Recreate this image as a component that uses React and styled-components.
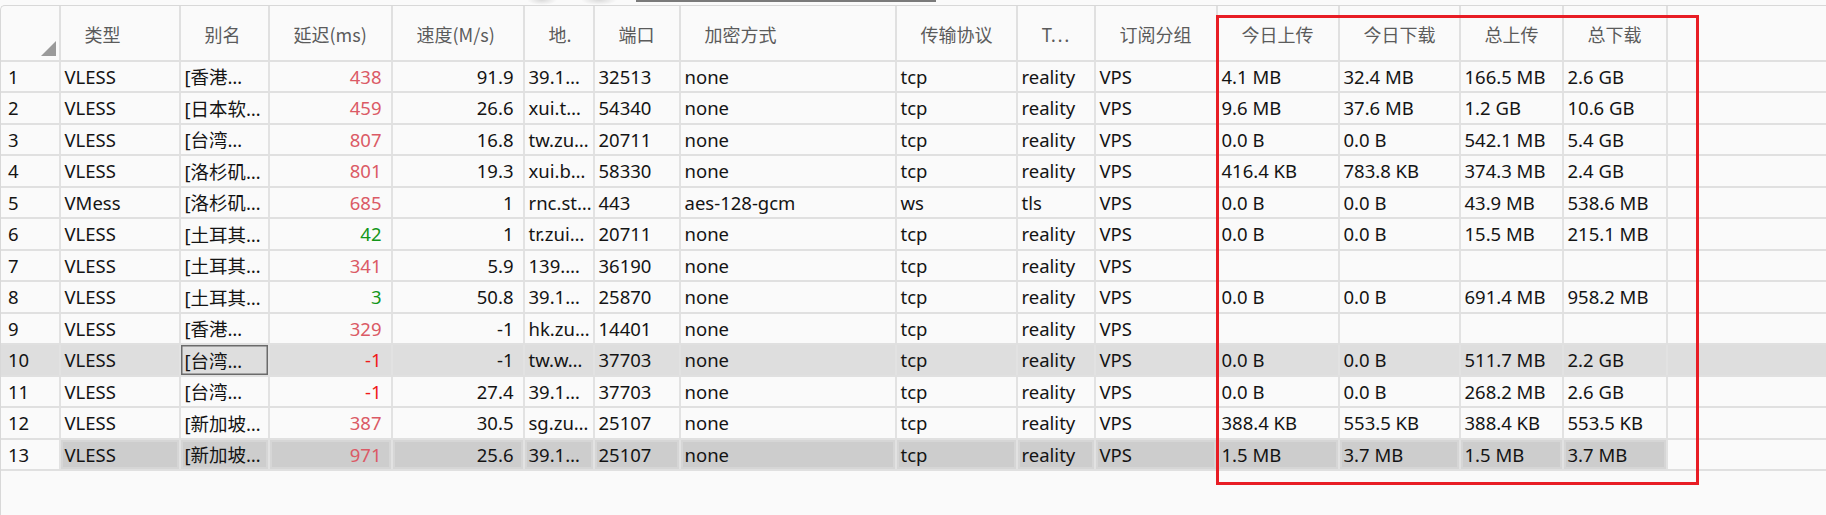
import React from 'react'
import styled, { createGlobalStyle, css } from 'styled-components'

const GlobalStyle = createGlobalStyle`
  html, body {
    margin: 0;
    padding: 0;
    background: #fafafa;
  }
  body {
    font-family: "Noto Sans", "Noto Sans CJK SC", sans-serif;
  }
`

const columns = [
  { title: '', width: 59.5, kind: 'idx' },
  { title: '类型', width: 120 },
  { title: '别名', width: 89 },
  { title: '延迟(ms)', width: 123, align: 'right' },
  { title: '速度(M/s)', width: 132, align: 'right' },
  { title: '地.', width: 70 },
  { title: '端口', width: 86 },
  { title: '加密方式', width: 216 },
  { title: '传输协议', width: 121 },
  { title: 'T…', width: 78 },
  { title: '订阅分组', width: 122 },
  { title: '今日上传', width: 122 },
  { title: '今日下载', width: 121 },
  { title: '总上传', width: 103 },
  { title: '总下载', width: 104 },
]

const template = columns.map((c) => `${c.width}px`).join(' ') + ' 1fr'

// latency tone: 'ok' soft red, 'bad' bright red, 'good' green
const rows = [
  ['VLESS', '[香港…', ['438', 'ok'], '91.9', '39.1…', '32513', 'none', 'tcp', 'reality', 'VPS', '4.1 MB', '32.4 MB', '166.5 MB', '2.6 GB'],
  ['VLESS', '[日本软…', ['459', 'ok'], '26.6', 'xui.t…', '54340', 'none', 'tcp', 'reality', 'VPS', '9.6 MB', '37.6 MB', '1.2 GB', '10.6 GB'],
  ['VLESS', '[台湾…', ['807', 'ok'], '16.8', 'tw.zu…', '20711', 'none', 'tcp', 'reality', 'VPS', '0.0 B', '0.0 B', '542.1 MB', '5.4 GB'],
  ['VLESS', '[洛杉矶…', ['801', 'ok'], '19.3', 'xui.b…', '58330', 'none', 'tcp', 'reality', 'VPS', '416.4 KB', '783.8 KB', '374.3 MB', '2.4 GB'],
  ['VMess', '[洛杉矶…', ['685', 'ok'], '1', 'rnc.st…', '443', 'aes-128-gcm', 'ws', 'tls', 'VPS', '0.0 B', '0.0 B', '43.9 MB', '538.6 MB'],
  ['VLESS', '[土耳其…', ['42', 'good'], '1', 'tr.zui…', '20711', 'none', 'tcp', 'reality', 'VPS', '0.0 B', '0.0 B', '15.5 MB', '215.1 MB'],
  ['VLESS', '[土耳其…', ['341', 'ok'], '5.9', '139.…', '36190', 'none', 'tcp', 'reality', 'VPS', '', '', '', ''],
  ['VLESS', '[土耳其…', ['3', 'good'], '50.8', '39.1…', '25870', 'none', 'tcp', 'reality', 'VPS', '0.0 B', '0.0 B', '691.4 MB', '958.2 MB'],
  ['VLESS', '[香港…', ['329', 'ok'], '-1', 'hk.zu…', '14401', 'none', 'tcp', 'reality', 'VPS', '', '', '', ''],
  ['VLESS', '[台湾…', ['-1', 'bad'], '-1', 'tw.w…', '37703', 'none', 'tcp', 'reality', 'VPS', '0.0 B', '0.0 B', '511.7 MB', '2.2 GB'],
  ['VLESS', '[台湾…', ['-1', 'bad'], '27.4', '39.1…', '37703', 'none', 'tcp', 'reality', 'VPS', '0.0 B', '0.0 B', '268.2 MB', '2.6 GB'],
  ['VLESS', '[新加坡…', ['387', 'ok'], '30.5', 'sg.zu…', '25107', 'none', 'tcp', 'reality', 'VPS', '388.4 KB', '553.5 KB', '388.4 KB', '553.5 KB'],
  ['VLESS', '[新加坡…', ['971', 'ok'], '25.6', '39.1…', '25107', 'none', 'tcp', 'reality', 'VPS', '1.5 MB', '3.7 MB', '1.5 MB', '3.7 MB'],
]

const toneColor = {
  ok: '#db5a66',
  bad: '#f01a1a',
  good: '#13961a',
}

const Page = styled.div`
  position: relative;
  width: 1826px;
  height: 515px;
  overflow: hidden;
`

const TopStrip = styled.div`
  height: 5px;
  display: flex;
  background:
    radial-gradient(ellipse 15px 5px at 542px 0, rgba(0, 0, 0, 0.13), transparent),
    radial-gradient(ellipse 18px 5px at 599px 0, rgba(0, 0, 0, 0.13), transparent);
  .thumb {
    margin-left: 636px;
    width: 300px;
    height: 2px;
    background: #7a7a7a;
  }
`

const Table = styled.div`
  height: 510px;
  box-sizing: border-box;
  border-top: 1.5px solid #d8d8d8;
  border-left: 1.5px solid #d8d8d8;
  border-top-left-radius: 5px;
`

const HeaderRow = styled.div`
  display: grid;
  grid-template-columns: ${template};
  height: 55.5px;
  box-sizing: border-box;
  border-bottom: 2px solid #e0e0e0;
`

const HeaderCell = styled.div`
  display: flex;
  align-items: center;
  box-sizing: border-box;
  padding: 3px 0 0 24px;
  font-family: "Noto Sans CJK SC", "Noto Sans", sans-serif;
  font-size: 18px;
  color: #5b5b5b;
  white-space: nowrap;
  border-right: ${(p) => (p.$last ? 'none' : '2px solid #e0e0e0')};
`

const Corner = styled.div`
  display: flex;
  align-items: flex-end;
  justify-content: flex-end;
  padding: 0 3px 4px 0;
  border-right: 2px solid #e0e0e0;
`

const Row = styled.div`
  display: grid;
  grid-template-columns: ${template};
  height: 31.5px;
  box-sizing: border-box;
  border-bottom: 2px solid #e0e0e0;
  background: ${(p) => (p.$current ? '#dedede' : '#fafafa')};
`

const Cell = styled.div`
  position: relative;
  display: flex;
  align-items: center;
  justify-content: ${(p) => (p.$align === 'right' ? 'flex-end' : 'flex-start')};
  box-sizing: border-box;
  padding: ${(p) => (p.$idx ? '0 0 0 7px' : p.$align === 'right' ? '0 9px 0 0' : '0 0 0 4px')};
  font-size: 18.5px;
  color: ${(p) => p.$color || '#141414'};
  white-space: nowrap;
  overflow: hidden;
  border-right: ${(p) => (p.$last ? 'none' : '2px solid #e2e2e2')};
  ${(p) =>
    p.$selected &&
    css`
      background: #cdcdcd;
      box-shadow: inset 0 0 0 2px #d6d6d6;
    `}
  ${(p) =>
    p.$focus &&
    css`
      box-shadow: inset 0 0 0 1.5px #6b6b6b;
    `}
`

const Highlight = styled.div`
  position: absolute;
  left: 1216px;
  top: 15px;
  width: 483px;
  height: 470px;
  box-sizing: border-box;
  border: 3px solid #e81d25;
  pointer-events: none;
`

const CornerMark = () => (
  <svg width="15" height="15" viewBox="0 0 15 15">
    <polygon points="0,15 15,15 15,0" fill="#9a9a9a" />
  </svg>
)

const App = () => {
  return (
    <Page>
      <GlobalStyle />
      <TopStrip>
        <div className="thumb" />
      </TopStrip>
      <Table>
        <HeaderRow>
          <Corner>
            <CornerMark />
          </Corner>
          {columns.slice(1).map((c) => (
            <HeaderCell key={c.title}>{c.title}</HeaderCell>
          ))}
          <HeaderCell $last />
        </HeaderRow>
        {rows.map((r, i) => {
          const n = i + 1
          const current = n === 10
          const selected = n === 13
          return (
            <Row key={n} $current={current}>
              <Cell $idx>{n}</Cell>
              {r.map((v, j) => {
                const col = columns[j + 1]
                const isTone = Array.isArray(v)
                return (
                  <Cell
                    key={j}
                    $align={col.align}
                    $color={isTone ? toneColor[v[1]] : undefined}
                    $selected={selected}
                    $focus={current && j === 1}
                  >
                    {isTone ? v[0] : v}
                  </Cell>
                )
              })}
              <Cell $last />
            </Row>
          )
        })}
      </Table>
      <Highlight />
    </Page>
  )
}

export default App
